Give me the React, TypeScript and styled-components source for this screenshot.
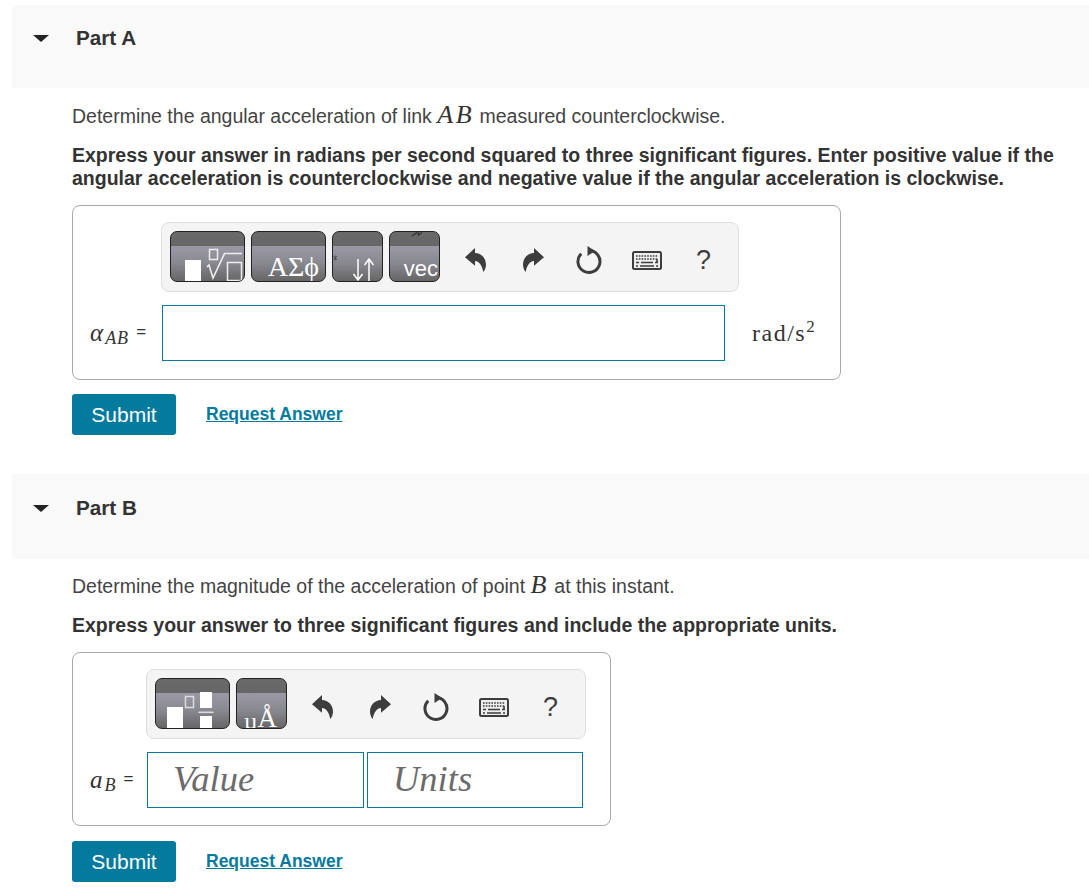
import React from 'react';
import styled, { createGlobalStyle } from 'styled-components';

const teal = '#047a9c';

const GlobalStyle = createGlobalStyle`
  html, body {
    margin: 0;
    padding: 0;
    background: #fff;
    font-family: "Liberation Sans", Arial, sans-serif;
    color: #333;
  }
`;

const Page = styled.div`
  width: 1089px;
  height: 889px;
  overflow: hidden;
  padding-top: 5px;
  box-sizing: border-box;
`;

const PartSection = styled.section`
  margin-bottom: 39px;
`;

const PartHeader = styled.div<{ $height: number; $top: number }>`
  height: ${({ $height }) => $height}px;
  margin-left: 12px;
  padding: ${({ $top }) => $top}px 0 0 21px;
  box-sizing: border-box;
  background: #f9f9f9;
  display: flex;
  align-items: flex-start;
`;

const Caret = styled.span`
  width: 0;
  height: 0;
  margin-top: 9px;
  border-left: 8px solid transparent;
  border-right: 8px solid transparent;
  border-top: 7px solid #222;
`;

const PartTitle = styled.h2`
  margin: 0 0 0 27px;
  font-size: 20.7px;
  line-height: 24px;
  font-weight: 700;
  color: #333;
`;

const PartBody = styled.div<{ $top: number }>`
  padding: ${({ $top }) => $top}px 28px 0 72px;
`;

const Prompt = styled.p`
  margin: 0;
  font-size: 19.5px;
  line-height: 23px;
  color: #444;
`;

const MathVar = styled.i`
  font-family: "Liberation Serif", serif;
  font-size: 26px;
  letter-spacing: 2.5px;
  line-height: 20px;
  color: #333;
`;

const Instruction = styled.p<{ $after: number }>`
  margin: 16px 0 ${({ $after }) => $after}px;
  font-size: 19.5px;
  line-height: 23px;
  font-weight: 700;
  color: #333;
`;

const AnswerBox = styled.div<{ $width: number; $bottom: number }>`
  width: ${({ $width }) => $width}px;
  box-sizing: border-box;
  padding: 16px 0 ${({ $bottom }) => $bottom}px;
  border: 1px solid #aaa;
  border-radius: 8px;
`;

const Toolbar = styled.div<{ $indent: number; $width: number }>`
  width: ${({ $width }) => $width}px;
  height: 70px;
  margin-left: ${({ $indent }) => $indent}px;
  padding: 8px 0 0 8px;
  box-sizing: border-box;
  display: flex;
  align-items: flex-start;
  background: #f4f4f4;
  border: 1px solid #ddd;
  border-radius: 8px;
`;

const PaletteButton = styled.div<{ $width: number; $pad?: number; $gap?: number }>`
  position: relative;
  width: ${({ $width }) => $width}px;
  height: 51px;
  margin-right: ${({ $gap }) => $gap ?? 6}px;
  padding-right: ${({ $pad }) => $pad ?? 0}px;
  box-sizing: border-box;
  flex: none;
  overflow: hidden;
  display: flex;
  justify-content: flex-end;
  align-items: flex-end;
  border: 1px solid #222;
  border-radius: 7px;
  background: linear-gradient(#6a6a6a 0, #666 14px, #9b99a5 14px, #8a8a92 30px, #666 100%);
  color: #fff;
`;

const GlyphSvg = styled.svg`
  position: absolute;
  left: -1px;
  top: -1px;
`;

const SerifGlyph = styled.span<{ $size: number; $drop?: number }>`
  font-family: "Liberation Serif", serif;
  font-size: ${({ $size }) => $size}px;
  line-height: 1;
  margin-bottom: ${({ $drop }) => $drop ?? 0}px;
  white-space: nowrap;
`;

const SansGlyph = styled.span`
  font-size: 22px;
  line-height: 1;
  margin-bottom: 1px;
  margin-right: 1px;
`;

const ToolIcons = styled.div`
  display: flex;
  align-items: center;
  height: 58px;
  margin-left: 7px;
`;

const ToolCell = styled.div`
  width: 57px;
  display: flex;
  justify-content: center;
  align-items: center;
  color: #3d3d3d;
`;

const HelpMark = styled.span`
  font-size: 27px;
  line-height: 1;
  color: #3d3d3d;
`;

const AnswerRow = styled.div`
  display: flex;
  align-items: center;
  margin-top: 13px;
`;

const AnswerLabel = styled.div<{ $width: number }>`
  width: ${({ $width }) => $width}px;
  flex: none;
  box-sizing: border-box;
  padding-left: 17px;
  font-family: "Liberation Serif", serif;
  font-size: 25px;
  line-height: 28px;
  color: #333;
  white-space: nowrap;
  display: flex;
  align-items: center;
`;

const Sub = styled.i`
  font-size: 18px;
  letter-spacing: 1px;
  margin-top: 10px;
  margin-left: 2px;
`;

const Equals = styled.span`
  font-family: "Liberation Sans", sans-serif;
  font-size: 17px;
  margin-left: 7px;
  margin-top: -3px;
`;

const AnswerInput = styled.input<{ $width: number }>`
  width: ${({ $width }) => $width}px;
  height: 56px;
  margin: 0;
  padding: 0 0 4px 25px;
  box-sizing: border-box;
  flex: none;
  background: #fff;
  border: 1px solid ${teal};
  border-radius: 0;
  outline: none;
  font-family: "Liberation Serif", serif;
  font-style: italic;
  font-size: 36.5px;
  color: #666;
  &::placeholder {
    color: #6b6b6b;
    opacity: 1;
  }
`;

const UnitGap = styled.span`
  width: 3px;
  flex: none;
`;

const UnitLabel = styled.div`
  margin-left: 27px;
  font-family: "Liberation Serif", serif;
  font-size: 24px;
  letter-spacing: 1.5px;
  color: #333;
  white-space: nowrap;
`;

const Sup = styled.sup`
  font-size: 17px;
  line-height: 0;
  vertical-align: 9px;
`;

const ActionRow = styled.div<{ $top: number }>`
  display: flex;
  align-items: center;
  margin-top: ${({ $top }) => $top}px;
`;

const SubmitButton = styled.button`
  width: 104px;
  height: 41px;
  padding: 0;
  border: none;
  border-radius: 3px;
  background: ${teal};
  color: #fff;
  font-family: "Liberation Sans", sans-serif;
  font-size: 21px;
`;

const RequestLink = styled.a`
  margin-left: 30px;
  font-size: 17.5px;
  font-weight: 700;
  color: ${teal};
  text-decoration: underline;
`;

const UndoIcon = ({ flip }: { flip?: boolean }) => (
  <svg width="22" height="25" viewBox="0 0 22 25" style={flip ? { transform: 'scaleX(-1)' } : undefined}>
    <path d="M10 0 L0 9.3 L10 17.7 V13 C14 13 17 17 18.3 24 C20 22 21 19 21 16.7 C21 10 16 5 10 5 Z" fill="currentColor" />
  </svg>
);

const ResetIcon = () => (
  <svg width="27" height="29" viewBox="0 0 27 29">
    <path d="M13 4.5 A11 11 0 1 1 5.2 7.7" fill="none" stroke="currentColor" strokeWidth="3" />
    <path d="M11.5 0 L19 5 L11.5 10 Z" fill="currentColor" />
  </svg>
);

const KeyboardIcon = () => (
  <svg width="30" height="19" viewBox="0 0 30 19">
    <rect x="1" y="1" width="28" height="17" rx="1.5" fill="#eee" stroke="currentColor" strokeWidth="2" />
    <path d="M4 5h22M4 8h22" stroke="currentColor" strokeWidth="1.6" strokeDasharray="1.6 1.2" />
    <path d="M4 11.5h3M9 11.5h12M23 11.5h3M25 8v4" stroke="currentColor" strokeWidth="1.6" />
    <path d="M4 15h2M8 15h14M24 15h2" stroke="currentColor" strokeWidth="1.6" />
  </svg>
);

const ToolIconSet = () => (
  <ToolIcons>
    <ToolCell><UndoIcon /></ToolCell>
    <ToolCell><UndoIcon flip /></ToolCell>
    <ToolCell><ResetIcon /></ToolCell>
    <ToolCell><KeyboardIcon /></ToolCell>
    <ToolCell><HelpMark>?</HelpMark></ToolCell>
  </ToolIcons>
);

const TemplatesGlyph = () => (
  <GlyphSvg width="75" height="51" viewBox="0 0 75 51">
    <rect x="15" y="29" width="16" height="22" fill="#fff" />
    <rect x="39.5" y="18.5" width="8" height="10" fill="none" stroke="#eee" strokeWidth="1.5" />
    <path d="M37 36 L39 34 L43 47 L54.5 22.5 H72" fill="none" stroke="#eee" strokeWidth="1.6" />
    <rect x="57.5" y="31.5" width="14" height="18" fill="none" stroke="#eee" strokeWidth="1.5" />
  </GlyphSvg>
);

const FractionGlyph = () => (
  <GlyphSvg width="75" height="51" viewBox="0 0 75 51">
    <rect x="12" y="29" width="16" height="22" fill="#fff" />
    <rect x="30.5" y="18.5" width="8" height="11" fill="none" stroke="#ddd" strokeWidth="1.5" />
    <rect x="45" y="14" width="12" height="16" fill="#fff" />
    <rect x="43.5" y="33.5" width="15" height="1.6" fill="#ddd" />
    <rect x="45" y="38" width="12" height="13" fill="#fff" />
  </GlyphSvg>
);

const ArrowsGlyph = () => (
  <GlyphSvg width="51" height="51" viewBox="0 0 51 51">
    <path d="M26 28 V48 M21.5 43 L26 49 L30.5 43 M37 50 V29 M32.5 34 L37 28 L41.5 34" fill="none" stroke="#fff" strokeWidth="1.5" />
    <path d="M1.5 25 L5 29 M5 25 L1.5 29 M3.2 24.5 V29.5" stroke="#444" strokeWidth="0.8" />
  </GlyphSvg>
);

const VecMark = () => (
  <GlyphSvg width="51" height="51" viewBox="0 0 51 51">
    <path d="M23 5 L28 1.5 M29 1 L29.5 4 L33 1.5" fill="none" stroke="#333" strokeWidth="1.3" />
  </GlyphSvg>
);

const RequestAnswer = ({ top }: { top: number }) => (
  <ActionRow $top={top}>
    <SubmitButton type="button">Submit</SubmitButton>
    <RequestLink href="#">Request Answer</RequestLink>
  </ActionRow>
);

export default function App() {
  return (
    <Page>
      <GlobalStyle />
      <PartSection>
        <PartHeader $height={83} $top={21}>
          <Caret />
          <PartTitle>Part A</PartTitle>
        </PartHeader>
        <PartBody $top={17}>
          <Prompt>
            Determine the angular acceleration of link <MathVar>AB</MathVar> measured counterclockwise.
          </Prompt>
          <Instruction $after={15}>
            Express your answer in radians per second squared to three significant figures. Enter positive value if the
            angular acceleration is counterclockwise and negative value if the angular acceleration is clockwise.
          </Instruction>
          <AnswerBox $width={769} $bottom={18}>
            <Toolbar $indent={88} $width={578}>
              <PaletteButton $width={75}><TemplatesGlyph /></PaletteButton>
              <PaletteButton $width={75} $pad={6}>
                <SerifGlyph $size={28} $drop={0}>ΑΣϕ</SerifGlyph>
              </PaletteButton>
              <PaletteButton $width={51}><ArrowsGlyph /></PaletteButton>
              <PaletteButton $width={51} $gap={0}>
                <VecMark />
                <SansGlyph>vec</SansGlyph>
              </PaletteButton>
              <ToolIconSet />
            </Toolbar>
            <AnswerRow>
              <AnswerLabel $width={89}>
                <i>α</i><Sub>AB</Sub><Equals>=</Equals>
              </AnswerLabel>
              <AnswerInput $width={563} aria-label="angular acceleration" />
              <UnitLabel>rad/s<Sup>2</Sup></UnitLabel>
            </AnswerRow>
          </AnswerBox>
          <RequestAnswer top={14} />
        </PartBody>
      </PartSection>
      <PartSection>
        <PartHeader $height={85} $top={22}>
          <Caret />
          <PartTitle>Part B</PartTitle>
        </PartHeader>
        <PartBody $top={16}>
          <Prompt>
            Determine the magnitude of the acceleration of point <MathVar>B</MathVar> at this instant.
          </Prompt>
          <Instruction $after={15}>
            Express your answer to three significant figures and include the appropriate units.
          </Instruction>
          <AnswerBox $width={539} $bottom={17}>
            <Toolbar $indent={73} $width={440}>
              <PaletteButton $width={75}><FractionGlyph /></PaletteButton>
              <PaletteButton $width={51} $gap={0} $pad={9}>
                <SerifGlyph $size={24} $drop={-5}>µ</SerifGlyph>
                <SerifGlyph $size={27} $drop={-4}>Å</SerifGlyph>
              </PaletteButton>
              <ToolIconSet />
            </Toolbar>
            <AnswerRow>
              <AnswerLabel $width={74}>
                <i>a</i><Sub>B</Sub><Equals>=</Equals>
              </AnswerLabel>
              <AnswerInput $width={217} placeholder="Value" />
              <UnitGap />
              <AnswerInput $width={216} placeholder="Units" />
            </AnswerRow>
          </AnswerBox>
          <RequestAnswer top={15} />
        </PartBody>
      </PartSection>
    </Page>
  );
}
